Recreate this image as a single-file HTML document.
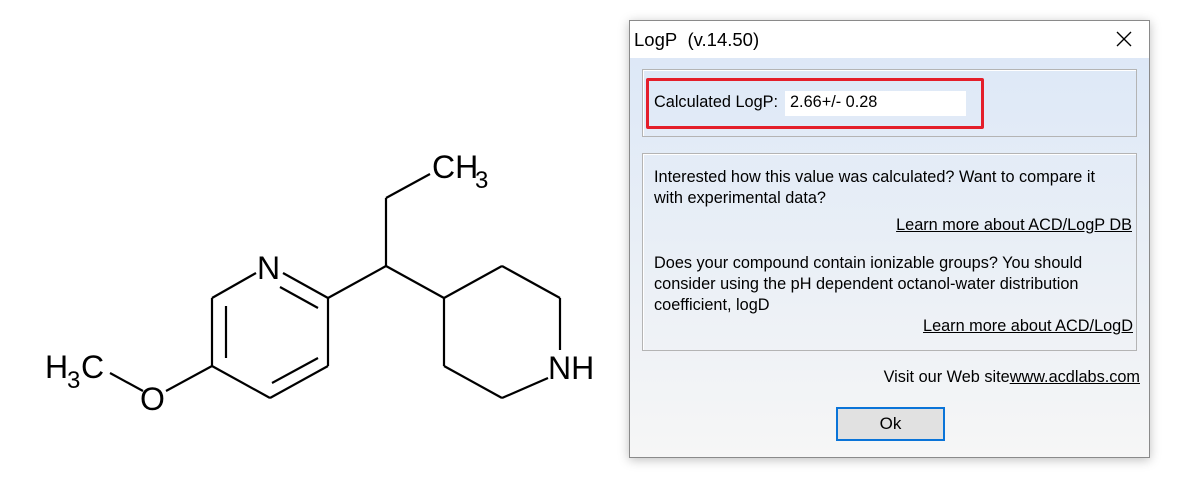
<!DOCTYPE html>
<html><head><style>
body{margin:0;width:1188px;height:484px;background:#fff;position:relative;overflow:hidden;font-family:"Liberation Sans",sans-serif}
.dlg{position:absolute;left:629px;top:20px;width:519px;height:436px;border:1px solid #8a8a8a;box-shadow:0 2px 10px rgba(0,0,0,.25);background:linear-gradient(#dbe7f7,#f6f6f6)}
.title{height:37px;background:#fff;font-size:18.5px;line-height:38px;padding-left:4px;color:#000}
.g{position:absolute;border:1px solid #b4b4b4;box-shadow:1px 1px 0 #fff inset}
.t{position:absolute;font-size:16.3px;color:#000;line-height:21px;white-space:nowrap}
a{color:#000;text-decoration:underline}
</style></head><body>
<svg width="620" height="484" style="position:absolute;left:0;top:0" stroke="#000" stroke-width="2.2" fill="none">
<line x1="212" y1="298" x2="256" y2="273"/>
<line x1="283" y1="273" x2="328" y2="298"/>
<line x1="280" y1="287" x2="318" y2="308"/>
<line x1="328" y1="298" x2="328" y2="366"/>
<line x1="328" y1="366" x2="270" y2="398"/>
<line x1="318" y1="358" x2="272" y2="383"/>
<line x1="270" y1="398" x2="212" y2="366"/>
<line x1="212" y1="366" x2="212" y2="298"/>
<line x1="226" y1="358" x2="226" y2="306"/>
<line x1="212" y1="366" x2="166" y2="391"/>
<line x1="143" y1="391" x2="110" y2="373"/>
<line x1="328" y1="298" x2="386" y2="266"/>
<line x1="386" y1="266" x2="386" y2="198"/>
<line x1="386" y1="198" x2="430" y2="174"/>
<line x1="386" y1="266" x2="444" y2="298"/>
<line x1="444" y1="298" x2="502" y2="266"/>
<line x1="502" y1="266" x2="560" y2="298"/>
<line x1="560" y1="298" x2="560" y2="350"/>
<line x1="548" y1="378" x2="502" y2="398"/>
<line x1="502" y1="398" x2="444" y2="366"/>
<line x1="444" y1="366" x2="444" y2="298"/>
<g stroke="none" fill="#000" font-family="Liberation Sans" font-size="32">
<text x="257" y="279">N</text>
<text x="140" y="410">O</text>
<text x="548" y="379">NH</text>
<text x="432" y="178">CH</text><text x="475" y="188" font-size="24">3</text>
<text x="45" y="378">H</text><text x="67" y="388" font-size="24">3</text><text x="81" y="378">C</text>
</g></svg>
<div class="dlg">
<div class="title">LogP&nbsp; (v.14.50)</div>
<svg style="position:absolute;left:486px;top:10px" width="16" height="16" stroke="#000" stroke-width="1.3"><line x1="1" y1="1" x2="15" y2="15"/><line x1="15" y1="1" x2="1" y2="15"/></svg>
<div class="g" style="left:12px;top:48px;width:493px;height:66px"></div>
<div style="position:absolute;left:16px;top:57px;width:332px;height:45px;border:3px solid #e41e2a;border-radius:2px"></div>
<div class="t" style="left:24px;top:71px">Calculated LogP:</div>
<div style="position:absolute;left:155px;top:70px;width:181px;height:25px;background:#fff"></div>
<div class="t" style="left:160px;top:71px">2.66+/- 0.28</div>
<div class="g" style="left:12px;top:132px;width:493px;height:196px"></div>
<div class="t" style="left:24px;top:146px">Interested how this value was calculated? Want to compare it<br>with experimental data?</div>
<div class="t" style="right:17px;top:194px"><a>Learn more about ACD/LogP DB</a></div>
<div class="t" style="left:24px;top:232px">Does your compound contain ionizable groups? You should<br>consider using the pH dependent octanol-water distribution<br>coefficient, logD</div>
<div class="t" style="right:16px;top:295px"><a>Learn more about ACD/LogD</a></div>
<div class="t" style="right:9px;top:346px">Visit our Web site<a>www.acdlabs.com</a></div>
<div style="position:absolute;left:206px;top:386px;width:109px;height:34px;border:2px solid #0a74d8;background:#e1e1e1;box-sizing:border-box;text-align:center;font-size:17px;line-height:30px">Ok</div>
</div>
</body></html>
